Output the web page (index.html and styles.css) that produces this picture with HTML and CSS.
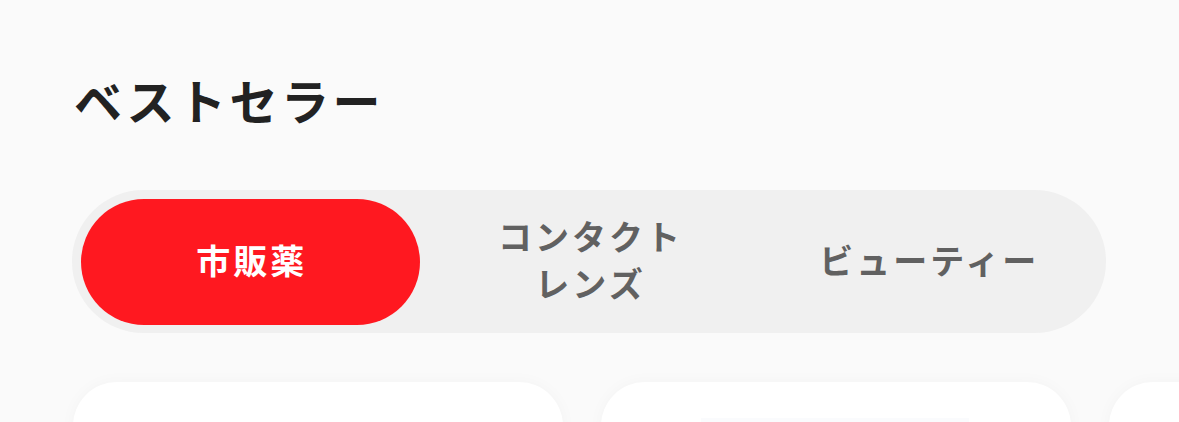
FILE: index.html
```html
<!DOCTYPE html>
<html lang="ja">
<head>
<meta charset="utf-8">
<link rel="stylesheet" href="styles.css">
</head>
<body>
<section class="bestseller">
  <h2 class="title">ベストセラー</h2>
  <div class="tabs">
    <button class="tab active">市販薬</button>
    <button class="tab">コンタクト<br>レンズ</button>
    <button class="tab">ビューティー</button>
  </div>
  <div class="cards">
    <div class="card card-1"></div>
    <div class="card card-2"><div class="thumb"></div></div>
    <div class="card card-3"></div>
  </div>
</section>
</body>
</html>
```

FILE: styles.css
```css
html, body {
  margin: 0;
  padding: 0;
  background: #fafafa;
  overflow: hidden;
}
body {
  width: 1179px;
  height: 422px;
  font-family: "Noto Sans CJK JP", "Noto Sans", sans-serif;
}
.bestseller {
  padding: 67px 0 0 72px;
  height: 355px;
  overflow: hidden;
}
.title {
  margin: 0 0 0 2px;
  font-size: 48px;
  font-weight: 700;
  color: #222;
  line-height: 64px;
  letter-spacing: 3.5px;
}
.tabs {
  margin-top: 59px;
  width: 1034px;
  height: 143px;
  box-sizing: border-box;
  padding: 9px 9px 8px;
  background: #f0f0f0;
  border-radius: 72px;
  display: grid;
  grid-template-columns: repeat(3, 1fr);
}
.tab {
  border: none;
  background: transparent;
  border-radius: 63px;
  font-family: inherit;
  font-size: 34px;
  font-weight: 700;
  letter-spacing: 3px;
  line-height: 47px;
  color: #616161;
  padding: 0 0 6px 3px;
  display: flex;
  align-items: center;
  justify-content: center;
  text-align: center;
}
.tab.active {
  background: #ff1820;
  color: #fff;
}
.cards {
  margin-top: 49px;
  display: flex;
  gap: 38px;
}
.card {
  flex: none;
  height: 200px;
  background: #fff;
  border-radius: 44px;
  box-shadow: 0 0 16px rgba(0,0,0,0.03);
}
.card-1 { width: 490px; margin-left: 1px; }
.card-2 { width: 470px; }
.card-3 { width: 200px; }
.thumb {
  margin: 36px 0 0 100px;
  width: 268px;
  height: 150px;
  background: #fafbfd;
}
```
